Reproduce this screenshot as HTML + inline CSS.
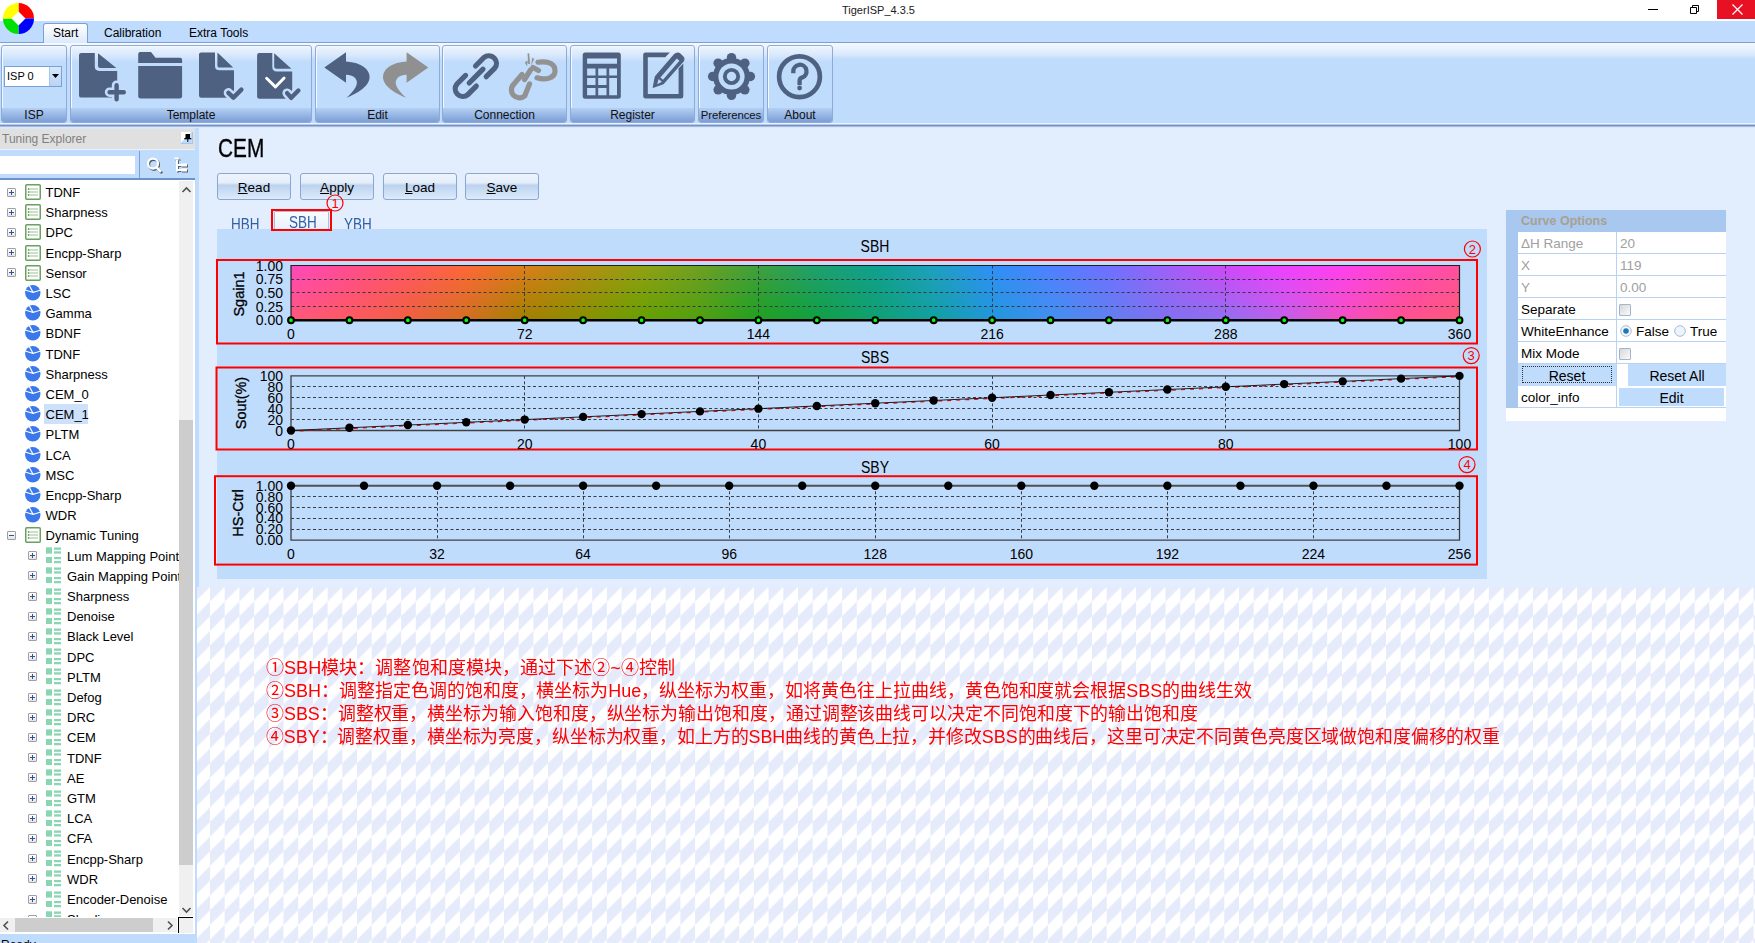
<!DOCTYPE html>
<html lang="zh-CN"><head><meta charset="utf-8">
<style>
*{box-sizing:border-box}
html,body{margin:0;padding:0}
body{width:1755px;height:943px;position:relative;overflow:hidden;font-family:"Liberation Sans",sans-serif;background:#fff;color:#000}
.a{position:absolute}
.t{position:absolute;white-space:nowrap;line-height:1}
/* ribbon */
.grp{position:absolute;top:45px;height:78px;border:1px solid #8eaad8;border-radius:3px;background:linear-gradient(#eef5fd 0px,#d6e7fb 10px,#c0dcfc 16px,#c0dcfc 100%);box-shadow:inset 1px 1px 0 #f4f8ff}
.grp .lb{position:absolute;left:0;right:0;bottom:0;height:14px;background:linear-gradient(#b4cff2,#7a9ed6);border-radius:0 0 2px 2px;font-size:12px;text-align:center;line-height:14px;color:#101010}
.ico{position:absolute}
.tree .r{position:absolute;height:20px;font-size:13.5px;line-height:20px;white-space:nowrap}
.btn{position:absolute;top:173px;height:27px;width:74px;border:1px solid #8aa6d6;border-radius:3px;background:linear-gradient(#eef4fc 0%,#e4eefa 35%,#bcd2ee 45%,#d0e2f6 80%,#dfeaf8 100%);font-size:13.5px;text-align:center;line-height:27px}
.ctit{font-size:14px}
.lbl{font-size:14px}
</style></head>
<body>
<!-- title bar -->
<div class="a" style="left:0;top:0;width:1755px;height:21px;background:#fff"></div>
<div class="t" style="left:842px;top:5px;font-size:11px;color:#202020">TigerISP_4.3.5</div>
<div class="a" style="left:1648px;top:9px;width:10px;height:1px;background:#000"></div>
<svg class="a" style="left:1690px;top:4px" width="11" height="11" viewBox="0 0 11 11"><path d="M0.5 3.5h6v6h-6z M2.5 3.5v-2h6v6h-2" fill="none" stroke="#000" stroke-width="1"/></svg>
<div class="a" style="left:1717px;top:0;width:38px;height:19px;background:#e81123"></div>
<svg class="a" style="left:1732px;top:4px" width="11" height="11" viewBox="0 0 11 11"><path d="M0.5 0.5L10.5 10.5M10.5 0.5L0.5 10.5" stroke="#fff" stroke-width="1.2"/></svg>

<!-- tab strip -->
<div class="a" style="left:0;top:21px;width:1755px;height:22px;background:#bfdbfd"></div>
<div class="a" style="left:0;top:42px;width:1755px;height:1px;background:#7d9fd4"></div>
<div class="a" style="left:43px;top:23px;width:45px;height:20px;border:1px solid #7d9fd4;border-bottom:none;border-radius:3px 3px 0 0;background:linear-gradient(#ffffff,#dce9fb)"></div>
<div class="t" style="left:53px;top:27px;font-size:12px">Start</div>
<div class="t" style="left:104px;top:27px;font-size:12px">Calibration</div>
<div class="t" style="left:189px;top:27px;font-size:12px">Extra Tools</div>

<!-- ribbon body -->
<div class="a" style="left:0;top:43px;width:1755px;height:84px;background:linear-gradient(#f6faff 0px,#d8e8fc 12px,#c0dcfc 16px,#c0dcfc 100%)"></div>



<!-- ribbon groups -->
<div class="grp" style="left:1px;width:66px"><div class="lb">ISP</div></div>
<div class="grp" style="left:70px;width:242px"><div class="lb">Template</div></div>
<div class="grp" style="left:315px;width:125px"><div class="lb">Edit</div></div>
<div class="grp" style="left:442px;width:125px"><div class="lb">Connection</div></div>
<div class="grp" style="left:570px;width:125px"><div class="lb">Register</div></div>
<div class="grp" style="left:698px;width:66px"><div class="lb" style="font-size:11.4px;letter-spacing:-0.1px">Preferences</div></div>
<div class="grp" style="left:767px;width:66px"><div class="lb">About</div></div>
<!-- ISP combo -->
<div class="a" style="left:4px;top:66px;width:58px;height:21px;border:1px solid #7d9fd4;background:#fff"></div>
<div class="a" style="left:49px;top:67px;width:12px;height:19px;background:linear-gradient(#d8e8fc,#b8d4f6);border-left:1px solid #a8c4ec"></div>
<svg class="a" style="left:52px;top:74px" width="7" height="5"><path d="M0 0H7L3.5 4Z" fill="#000"/></svg>
<div class="t" style="left:7px;top:71px;font-size:11px">ISP 0</div>
<!-- icons -->
<svg class="a" style="left:0;top:0" width="840" height="127">
 <g fill="#4f6181">
  <!-- new doc -->
  <path d="M79 55.2q0-2.2 2.2-2.2H94.8V66.5q0 4.4 4.4 4.4H117.2V95.4q0 2.2-2.2 2.2H81.2q-2.2 0-2.2-2.2Z"/><path d="M98 53.2L116.4 67.9H100.2q-2.2 0-2.2-2.2Z"/><path d="M109.6 92.2H123.8M116.6 85.2V99.2" fill="none" stroke="#c3dcfb" stroke-width="9.6" stroke-linecap="round" stroke-linejoin="round"/><path d="M109.6 92.2H123.8M116.6 85.2V99.2" fill="none" stroke="#4f6181" stroke-width="4.4" stroke-linecap="round" stroke-linejoin="round"/>
  <!-- folder -->
  <path d="M138.2 54q0-2 2-2H151L155.5 57.7H180q2.1 0 2.1 2.1V63H138.2Z"/>
  <path d="M138.2 66H182.1V96.3q0 2.1-2.1 2.1H140.3q-2.1 0-2.1-2.1Z"/>
  <!-- doc check -->
  <path d="M199 54.6q0-2.2 2.2-2.2H215V65.9q0 4.4 4.4 4.4H234V95.5q0 2.2-2.2 2.2H201.2q-2.2 0-2.2-2.2Z"/><path d="M217.4 52.6L233.2 67.6H219.6q-2.2 0-2.2-2.2Z"/><path d="M228.4 92.8L233.4 97.6L241.4 89.6" fill="none" stroke="#c3dcfb" stroke-width="9.4" stroke-linecap="round" stroke-linejoin="round"/><path d="M228.4 92.8L233.4 97.6L241.4 89.6" fill="none" stroke="#4f6181" stroke-width="4.4" stroke-linecap="round" stroke-linejoin="round"/>
  <!-- doc V check -->
  <path d="M257.1 55.2q0-2.2 2.2-2.2H272.3V67.1q0 4.4 4.4 4.4H292.2V96.6q0 2.2-2.2 2.2H259.3q-2.2 0-2.2-2.2Z"/><path d="M274.2 53.2L291.4 68.8H276.4q-2.2 0-2.2-2.2Z"/><path d="M266.6 78.3L275.4 86.9L284.1 78" fill="none" stroke="#fff" stroke-width="2.9" stroke-linecap="round" stroke-linejoin="round"/><path d="M287.1 93.1L291.2 97.8L298.4 90.5" fill="none" stroke="#c3dcfb" stroke-width="9.4" stroke-linecap="round" stroke-linejoin="round"/><path d="M287.1 93.1L291.2 97.8L298.4 90.5" fill="none" stroke="#4f6181" stroke-width="4.4" stroke-linecap="round" stroke-linejoin="round"/>
  <!-- undo -->
  <path d="M324.3 67.5L346 52.3V61.6C362 62.5 370 70 369.6 77.5C369 87 356 94 346.5 97.7C353 92 360 84 355.5 78.5C353.5 76 350 75 346 74.8V82.7Z"/>
  <!-- calculator -->
  <path fill-rule="evenodd" d="M585.2 52.4H618.3q2.5 0 2.5 2.5V96.2q0 2.5-2.5 2.5H585.2q-2.5 0-2.5-2.5V54.9q0-2.5 2.5-2.5Z M587.1 58.6H617V63.7H587.1Z M587.1 68.6H595.5V75.5H587.1Z M598.2 68.6H606.5V75.5H598.2Z M609.2 68.6H617V75.5H609.2Z M587.1 78H595.5V85H587.1Z M598.2 78H606.5V85H598.2Z M609.2 78H617V95.2H609.2Z M587.1 87.9H595.5V95.2H587.1Z M598.2 87.9H606.5V95.2H598.2Z"/>
  <!-- edit square -->
  <path d="M645.5 52.4H669.8L665.2 57.2H647.8V94H678.6V68.5L683.3 63.5V96.3q0 2.3-2.3 2.3H645.5q-2.3 0-2.3-2.3V54.7q0-2.3 2.3-2.3Z"/>
  <path stroke="#4f6181" stroke-width="1.2" stroke-linejoin="round" d="M653.3 87.3L655.4 76.6L674.6 54.4Q677.5 51.8 680.3 54.3L682.8 56.6Q685.2 59.4 682.3 62.2L663.3 83.6Z"/><path fill="#c0dcfc" d="M657.2 84.2L658.6 78.9L661.9 81.7Z M660.4 77.6L676.8 58.6L679.4 60.8L663 79.8Z"/>
  <!-- gear -->
  <g transform="translate(731.5 76.5)">
   <circle r="18.6"/><circle cx="0.00" cy="-18.90" r="4.7"/><circle cx="13.36" cy="-13.36" r="4.7"/><circle cx="18.90" cy="-0.00" r="4.7"/><circle cx="13.36" cy="13.36" r="4.7"/><circle cx="0.00" cy="18.90" r="4.7"/><circle cx="-13.36" cy="13.36" r="4.7"/><circle cx="-18.90" cy="0.00" r="4.7"/><circle cx="-13.36" cy="-13.36" r="4.7"/>
   <circle r="13.1" fill="#c0dcfc"/><circle r="8.6"/><circle r="4.7" fill="#c0dcfc"/>
  </g>
  <!-- help -->
  <circle cx="799.5" cy="76.7" r="20.4" fill="none" stroke="#4f6181" stroke-width="4.7"/>
  <path d="M793.3 73.2V71.5A6.6 6.6 0 1 1 802 77.6Q799.6 78.5 799.6 81V85" fill="none" stroke="#4f6181" stroke-width="4.3"/>
  <circle cx="799.6" cy="88" r="2.4"/>
 </g>
 <g fill="#909090">
  <path transform="translate(752.6 0) scale(-1 1)" d="M324.3 67.5L346 52.3V61.6C362 62.5 370 70 369.6 77.5C369 87 356 94 346.5 97.7C353 92 360 84 355.5 78.5C353.5 76 350 75 346 74.8V82.7Z"/>
 </g>
 <!-- link -->
 <g fill="none" stroke="#4f6181" stroke-width="5.2" stroke-linecap="round">
  <path d="M475.5 66L484 57.5A7.6 7.6 0 0 1 494.7 68.2L486.2 76.7"/>
  <path d="M465.6 75.4L457 84A7.6 7.6 0 0 0 467.7 94.7L476.3 86.1"/>
  <path d="M469.2 83L483 69.2"/>
 </g>
 <!-- broken link -->
 <g fill="none" stroke="#929292" stroke-width="5.2" stroke-linecap="round">
  <path d="M522 74.5L514 84A7.6 7.6 0 0 0 524.8 95.8L529.5 84"/>
  <path d="M538 62.2C549 60.5 555.5 64.5 555 71.5C554.5 78 546 80.5 537 77.8"/>
  <path d="M524.5 79.5L530.5 70"/>
  <path d="M533 67.5L538.5 70.5"/>
 </g>
 <g fill="#929292">
  <path d="M527.5 53.5L529.2 53.3L530 64L528.2 64Z"/>
  <path d="M524.8 62.2L527.8 60.5L527 66.5Z"/>
  <path d="M532.2 57.7L534.2 58.7L531.2 65.5Z"/>
 </g>
</svg>

<!-- main content light bg -->
<div class="a" style="left:195px;top:127px;width:1560px;height:816px;background:#e2eefd"></div>
<div class="a" style="left:195px;top:127px;width:4px;height:816px;background:#c0dcfc"></div>

<!-- MDI pattern -->
<svg class="a" style="left:197px;top:587px" width="1558" height="356">
 <defs>
  <pattern id="harl" patternUnits="userSpaceOnUse" width="29.4" height="29.4" x="13" y="-0.2">
    <rect width="29.4" height="29.4" fill="#e6ebfc"/>
    <path d="M0 14.7 L14.7 0 L14.7 14.7 L0 29.4 Z M14.7 14.7 L29.4 0 L29.4 14.7 L14.7 29.4 Z" fill="#ffffff"/>
  </pattern>
 </defs>
 <rect width="1558" height="356" fill="url(#harl)"/>
</svg>

<!-- MAIN CONTENT -->
<div class="t" style="left:217.5px;top:135px;font-size:26px;transform:scaleX(0.80);transform-origin:0 0;-webkit-text-stroke:0.35px #000">CEM</div>
<div class="btn" style="left:217px"><span style="text-decoration:underline">R</span>ead</div>
<div class="btn" style="left:300px"><span style="text-decoration:underline">A</span>pply</div>
<div class="btn" style="left:383px"><span style="text-decoration:underline">L</span>oad</div>
<div class="btn" style="left:465px"><span style="text-decoration:underline">S</span>ave</div>
<div class="a" style="left:274px;top:211px;width:55px;height:20px;background:linear-gradient(#f8fbff,#e8f0fb);border:1px solid #a8bedc;border-bottom:none;border-radius:2px 2px 0 0"></div>
<div class="t" style="left:231px;top:217.0px;font-size:13.5px;color:#2f5fa8;transform:scaleY(1.22);transform-origin:0 0">HBH</div>
<div class="t" style="left:289px;top:215.0px;font-size:13.5px;color:#2f5fa8;transform:scaleY(1.22);transform-origin:0 0">SBH</div>
<div class="t" style="left:344px;top:217.0px;font-size:13.5px;color:#2f5fa8;transform:scaleY(1.22);transform-origin:0 0">YBH</div>
<div class="a" style="left:217px;top:229px;width:1270px;height:350px;background:#c0dcfc"></div>
<div class="a" style="left:271px;top:209px;width:61px;height:22px;border:2px solid #f00"></div>
<svg class="a" style="left:0;top:0" width="1755" height="943" font-family="Liberation Sans, sans-serif">
<defs>
<linearGradient id="gt" x1="0" y1="0" x2="1" y2="0">
<stop offset="0" stop-color="#ff48c0"/><stop offset=".05" stop-color="#ff4c90"/><stop offset=".10" stop-color="#ff5860"/><stop offset=".15" stop-color="#ff6838"/><stop offset=".20" stop-color="#dc7e1a"/><stop offset=".25" stop-color="#b48e14"/><stop offset=".30" stop-color="#94a014"/><stop offset=".35" stop-color="#6ea024"/><stop offset=".40" stop-color="#40a040"/><stop offset=".45" stop-color="#20a070"/><stop offset=".50" stop-color="#10a090"/><stop offset=".55" stop-color="#20a0c0"/><stop offset=".60" stop-color="#3090f8"/><stop offset=".65" stop-color="#5080ff"/><stop offset=".70" stop-color="#7070ff"/><stop offset=".75" stop-color="#a060f8"/><stop offset=".80" stop-color="#d048f8"/><stop offset=".85" stop-color="#f040ff"/><stop offset=".90" stop-color="#ff40f0"/><stop offset=".95" stop-color="#ff48c0"/><stop offset="1" stop-color="#ff50a0"/>
</linearGradient>
<linearGradient id="gb" x1="0" y1="0" x2="1" y2="0">
<stop offset="0" stop-color="#ff5878"/><stop offset=".05" stop-color="#ff5a60"/><stop offset=".10" stop-color="#f06040"/><stop offset=".15" stop-color="#d07020"/><stop offset=".20" stop-color="#a08000"/><stop offset=".25" stop-color="#889000"/><stop offset=".30" stop-color="#66a000"/><stop offset=".35" stop-color="#50a010"/><stop offset=".40" stop-color="#20a020"/><stop offset=".45" stop-color="#10a040"/><stop offset=".50" stop-color="#10a070"/><stop offset=".55" stop-color="#10a0a0"/><stop offset=".60" stop-color="#2098d8"/><stop offset=".65" stop-color="#4090f0"/><stop offset=".70" stop-color="#6080f0"/><stop offset=".75" stop-color="#8070f0"/><stop offset=".80" stop-color="#9070f0"/><stop offset=".85" stop-color="#c060e8"/><stop offset=".90" stop-color="#f050c0"/><stop offset=".95" stop-color="#ff5090"/><stop offset="1" stop-color="#ff5878"/>
</linearGradient>
<linearGradient id="gm" x1="0" y1="0" x2="0" y2="1"><stop offset="0" stop-color="#fff" stop-opacity="0"/><stop offset="1" stop-color="#fff" stop-opacity="1"/></linearGradient>
<mask id="mk" maskContentUnits="objectBoundingBox"><rect width="1" height="1" fill="url(#gm)"/></mask>
</defs>
<text transform="translate(875 252.2) scale(1 1.13)" font-size="14" text-anchor="middle">SBH</text>
<rect x="217" y="260" width="1260" height="83.5" fill="none" stroke="#f00" stroke-width="2"/>
<circle cx="1472.4" cy="249" r="8" fill="none" stroke="#f00" stroke-width="1.2"/><text x="1472.4" y="253.6" font-size="13" fill="#f00" text-anchor="middle">2</text>
<rect x="291.0" y="265.5" width="1168.5" height="54.69999999999999" fill="url(#gt)"/>
<rect x="291.0" y="265.5" width="1168.5" height="54.69999999999999" fill="url(#gb)" mask="url(#mk)"/>
<path d="M524.5 265.5V320.2" stroke="#363c44" stroke-width="1" stroke-dasharray="3 2.5"/>
<path d="M758.5 265.5V320.2" stroke="#363c44" stroke-width="1" stroke-dasharray="3 2.5"/>
<path d="M992.5 265.5V320.2" stroke="#363c44" stroke-width="1" stroke-dasharray="3 2.5"/>
<path d="M1225.5 265.5V320.2" stroke="#363c44" stroke-width="1" stroke-dasharray="3 2.5"/>
<path d="M291 306.5H1459.5" stroke="#363c44" stroke-width="1" stroke-dasharray="3 2.5"/>
<path d="M291 292.5H1459.5" stroke="#363c44" stroke-width="1" stroke-dasharray="3 2.5"/>
<path d="M291 279.5H1459.5" stroke="#363c44" stroke-width="1" stroke-dasharray="3 2.5"/>
<path d="M291.0 320.2V265.5H1459.5V320.2" fill="none" stroke="#202020" stroke-width="1.2"/>
<path d="M291.0 320.2H1459.5" stroke="#000" stroke-width="2.6"/>
<circle cx="291" cy="320.2" r="2.9" fill="#00ff00" stroke="#000" stroke-width="2.1"/>
<circle cx="349.43" cy="320.2" r="2.9" fill="#00ff00" stroke="#000" stroke-width="2.1"/>
<circle cx="407.85" cy="320.2" r="2.9" fill="#00ff00" stroke="#000" stroke-width="2.1"/>
<circle cx="466.27" cy="320.2" r="2.9" fill="#00ff00" stroke="#000" stroke-width="2.1"/>
<circle cx="524.7" cy="320.2" r="2.9" fill="#00ff00" stroke="#000" stroke-width="2.1"/>
<circle cx="583.12" cy="320.2" r="2.9" fill="#00ff00" stroke="#000" stroke-width="2.1"/>
<circle cx="641.55" cy="320.2" r="2.9" fill="#00ff00" stroke="#000" stroke-width="2.1"/>
<circle cx="699.98" cy="320.2" r="2.9" fill="#00ff00" stroke="#000" stroke-width="2.1"/>
<circle cx="758.4" cy="320.2" r="2.9" fill="#00ff00" stroke="#000" stroke-width="2.1"/>
<circle cx="816.83" cy="320.2" r="2.9" fill="#00ff00" stroke="#000" stroke-width="2.1"/>
<circle cx="875.25" cy="320.2" r="2.9" fill="#00ff00" stroke="#000" stroke-width="2.1"/>
<circle cx="933.67" cy="320.2" r="2.9" fill="#00ff00" stroke="#000" stroke-width="2.1"/>
<circle cx="992.1" cy="320.2" r="2.9" fill="#00ff00" stroke="#000" stroke-width="2.1"/>
<circle cx="1050.53" cy="320.2" r="2.9" fill="#00ff00" stroke="#000" stroke-width="2.1"/>
<circle cx="1108.95" cy="320.2" r="2.9" fill="#00ff00" stroke="#000" stroke-width="2.1"/>
<circle cx="1167.38" cy="320.2" r="2.9" fill="#00ff00" stroke="#000" stroke-width="2.1"/>
<circle cx="1225.8" cy="320.2" r="2.9" fill="#00ff00" stroke="#000" stroke-width="2.1"/>
<circle cx="1284.22" cy="320.2" r="2.9" fill="#00ff00" stroke="#000" stroke-width="2.1"/>
<circle cx="1342.65" cy="320.2" r="2.9" fill="#00ff00" stroke="#000" stroke-width="2.1"/>
<circle cx="1401.08" cy="320.2" r="2.9" fill="#00ff00" stroke="#000" stroke-width="2.1"/>
<circle cx="1459.5" cy="320.2" r="2.9" fill="#00ff00" stroke="#000" stroke-width="2.1"/>
<text x="283" y="270.5" font-size="14" text-anchor="end">1.00</text>
<text x="283" y="284.18" font-size="14" text-anchor="end">0.75</text>
<text x="283" y="297.85" font-size="14" text-anchor="end">0.50</text>
<text x="283" y="311.52" font-size="14" text-anchor="end">0.25</text>
<text x="283" y="325.2" font-size="14" text-anchor="end">0.00</text>
<text x="291" y="338.5" font-size="14" text-anchor="middle">0</text>
<text x="524.7" y="338.5" font-size="14" text-anchor="middle">72</text>
<text x="758.4" y="338.5" font-size="14" text-anchor="middle">144</text>
<text x="992.1" y="338.5" font-size="14" text-anchor="middle">216</text>
<text x="1225.8" y="338.5" font-size="14" text-anchor="middle">288</text>
<text x="1459.5" y="338.5" font-size="14" text-anchor="middle">360</text>
<text transform="translate(243.5 294) rotate(-90)" font-size="14.5" stroke="#000" stroke-width="0.3" text-anchor="middle">Sgain1</text>
<text transform="translate(875 363.2) scale(1 1.13)" font-size="14" text-anchor="middle">SBS</text>
<rect x="216.5" y="367.5" width="1260.5" height="82" fill="none" stroke="#f00" stroke-width="2"/>
<circle cx="1471.2" cy="355.6" r="8" fill="none" stroke="#f00" stroke-width="1.2"/><text x="1471.2" y="360.20000000000005" font-size="13" fill="#f00" text-anchor="middle">3</text>
<path d="M524.5 375.9V430.5" stroke="#363c44" stroke-width="1" stroke-dasharray="3 2.5"/>
<path d="M758.5 375.9V430.5" stroke="#363c44" stroke-width="1" stroke-dasharray="3 2.5"/>
<path d="M992.5 375.9V430.5" stroke="#363c44" stroke-width="1" stroke-dasharray="3 2.5"/>
<path d="M1225.5 375.9V430.5" stroke="#363c44" stroke-width="1" stroke-dasharray="3 2.5"/>
<path d="M291 419.5H1459.5" stroke="#363c44" stroke-width="1" stroke-dasharray="3 2.5"/>
<path d="M291 408.5H1459.5" stroke="#363c44" stroke-width="1" stroke-dasharray="3 2.5"/>
<path d="M291 397.5H1459.5" stroke="#363c44" stroke-width="1" stroke-dasharray="3 2.5"/>
<path d="M291 386.5H1459.5" stroke="#363c44" stroke-width="1" stroke-dasharray="3 2.5"/>
<path d="M291.0 430.5V375.9H1459.5V430.5H291.0" fill="none" stroke="#404040" stroke-width="1.3"/>
<path d="M291.0 431.3L1459.5 376.7" stroke="#f00000" stroke-width="1.1" stroke-dasharray="4 5"/>
<path d="M291.0 430.5L1459.5 375.9" stroke="#000" stroke-width="1" opacity="0.85"/>
<circle cx="291" cy="430.5" r="4.2" fill="#000"/>
<circle cx="349.43" cy="427.77" r="4.2" fill="#000"/>
<circle cx="407.85" cy="425.04" r="4.2" fill="#000"/>
<circle cx="466.27" cy="422.31" r="4.2" fill="#000"/>
<circle cx="524.7" cy="419.58" r="4.2" fill="#000"/>
<circle cx="583.12" cy="416.85" r="4.2" fill="#000"/>
<circle cx="641.55" cy="414.12" r="4.2" fill="#000"/>
<circle cx="699.98" cy="411.39" r="4.2" fill="#000"/>
<circle cx="758.4" cy="408.66" r="4.2" fill="#000"/>
<circle cx="816.83" cy="405.93" r="4.2" fill="#000"/>
<circle cx="875.25" cy="403.2" r="4.2" fill="#000"/>
<circle cx="933.67" cy="400.47" r="4.2" fill="#000"/>
<circle cx="992.1" cy="397.74" r="4.2" fill="#000"/>
<circle cx="1050.53" cy="395.01" r="4.2" fill="#000"/>
<circle cx="1108.95" cy="392.28" r="4.2" fill="#000"/>
<circle cx="1167.38" cy="389.55" r="4.2" fill="#000"/>
<circle cx="1225.8" cy="386.82" r="4.2" fill="#000"/>
<circle cx="1284.22" cy="384.09" r="4.2" fill="#000"/>
<circle cx="1342.65" cy="381.36" r="4.2" fill="#000"/>
<circle cx="1401.08" cy="378.63" r="4.2" fill="#000"/>
<circle cx="1459.5" cy="375.9" r="4.2" fill="#000"/>
<text x="283" y="380.9" font-size="14" text-anchor="end">100</text>
<text x="283" y="391.82" font-size="14" text-anchor="end">80</text>
<text x="283" y="402.74" font-size="14" text-anchor="end">60</text>
<text x="283" y="413.66" font-size="14" text-anchor="end">40</text>
<text x="283" y="424.58" font-size="14" text-anchor="end">20</text>
<text x="283" y="435.5" font-size="14" text-anchor="end">0</text>
<text x="291" y="448.5" font-size="14" text-anchor="middle">0</text>
<text x="524.7" y="448.5" font-size="14" text-anchor="middle">20</text>
<text x="758.4" y="448.5" font-size="14" text-anchor="middle">40</text>
<text x="992.1" y="448.5" font-size="14" text-anchor="middle">60</text>
<text x="1225.8" y="448.5" font-size="14" text-anchor="middle">80</text>
<text x="1459.5" y="448.5" font-size="14" text-anchor="middle">100</text>
<text transform="translate(246 403) rotate(-90)" font-size="14.5" stroke="#000" stroke-width="0.3" text-anchor="middle">Sout(%)</text>
<text transform="translate(875 473.2) scale(1 1.13)" font-size="14" text-anchor="middle">SBY</text>
<rect x="215" y="476.2" width="1262" height="88.4" fill="none" stroke="#f00" stroke-width="2"/>
<circle cx="1467" cy="464.6" r="8" fill="none" stroke="#f00" stroke-width="1.2"/><text x="1467" y="469.20000000000005" font-size="13" fill="#f00" text-anchor="middle">4</text>
<path d="M437.5 485.8V540.2" stroke="#363c44" stroke-width="1" stroke-dasharray="3 2.5"/>
<path d="M583.5 485.8V540.2" stroke="#363c44" stroke-width="1" stroke-dasharray="3 2.5"/>
<path d="M729.5 485.8V540.2" stroke="#363c44" stroke-width="1" stroke-dasharray="3 2.5"/>
<path d="M875.5 485.8V540.2" stroke="#363c44" stroke-width="1" stroke-dasharray="3 2.5"/>
<path d="M1021.5 485.8V540.2" stroke="#363c44" stroke-width="1" stroke-dasharray="3 2.5"/>
<path d="M1167.5 485.8V540.2" stroke="#363c44" stroke-width="1" stroke-dasharray="3 2.5"/>
<path d="M1313.5 485.8V540.2" stroke="#363c44" stroke-width="1" stroke-dasharray="3 2.5"/>
<path d="M291 529.5H1459.5" stroke="#363c44" stroke-width="1" stroke-dasharray="3 2.5"/>
<path d="M291 518.5H1459.5" stroke="#363c44" stroke-width="1" stroke-dasharray="3 2.5"/>
<path d="M291 507.5H1459.5" stroke="#363c44" stroke-width="1" stroke-dasharray="3 2.5"/>
<path d="M291 496.5H1459.5" stroke="#363c44" stroke-width="1" stroke-dasharray="3 2.5"/>
<path d="M291.0 485.8V540.2H1459.5V485.8" fill="none" stroke="#404040" stroke-width="1.3"/>
<path d="M291.0 485.8H1459.5" stroke="#505050" stroke-width="2"/>
<circle cx="291" cy="485.8" r="4.2" fill="#000"/>
<circle cx="364.03" cy="485.8" r="4.2" fill="#000"/>
<circle cx="437.06" cy="485.8" r="4.2" fill="#000"/>
<circle cx="510.09" cy="485.8" r="4.2" fill="#000"/>
<circle cx="583.12" cy="485.8" r="4.2" fill="#000"/>
<circle cx="656.16" cy="485.8" r="4.2" fill="#000"/>
<circle cx="729.19" cy="485.8" r="4.2" fill="#000"/>
<circle cx="802.22" cy="485.8" r="4.2" fill="#000"/>
<circle cx="875.25" cy="485.8" r="4.2" fill="#000"/>
<circle cx="948.28" cy="485.8" r="4.2" fill="#000"/>
<circle cx="1021.31" cy="485.8" r="4.2" fill="#000"/>
<circle cx="1094.34" cy="485.8" r="4.2" fill="#000"/>
<circle cx="1167.38" cy="485.8" r="4.2" fill="#000"/>
<circle cx="1240.41" cy="485.8" r="4.2" fill="#000"/>
<circle cx="1313.44" cy="485.8" r="4.2" fill="#000"/>
<circle cx="1386.47" cy="485.8" r="4.2" fill="#000"/>
<circle cx="1459.5" cy="485.8" r="4.2" fill="#000"/>
<text x="283" y="490.8" font-size="14" text-anchor="end">1.00</text>
<text x="283" y="501.68" font-size="14" text-anchor="end">0.80</text>
<text x="283" y="512.56" font-size="14" text-anchor="end">0.60</text>
<text x="283" y="523.44" font-size="14" text-anchor="end">0.40</text>
<text x="283" y="534.32" font-size="14" text-anchor="end">0.20</text>
<text x="283" y="545.2" font-size="14" text-anchor="end">0.00</text>
<text x="291" y="558.5" font-size="14" text-anchor="middle">0</text>
<text x="437.06" y="558.5" font-size="14" text-anchor="middle">32</text>
<text x="583.12" y="558.5" font-size="14" text-anchor="middle">64</text>
<text x="729.19" y="558.5" font-size="14" text-anchor="middle">96</text>
<text x="875.25" y="558.5" font-size="14" text-anchor="middle">128</text>
<text x="1021.31" y="558.5" font-size="14" text-anchor="middle">160</text>
<text x="1167.38" y="558.5" font-size="14" text-anchor="middle">192</text>
<text x="1313.44" y="558.5" font-size="14" text-anchor="middle">224</text>
<text x="1459.5" y="558.5" font-size="14" text-anchor="middle">256</text>
<text transform="translate(243 513) rotate(-90)" font-size="14.5" stroke="#000" stroke-width="0.3" text-anchor="middle">HS-Ctrl</text>
<circle cx="335" cy="203" r="8" fill="none" stroke="#f00" stroke-width="1.2"/><text x="335" y="207.6" font-size="13" fill="#f00" text-anchor="middle">1</text>
</svg>

<div class="a" style="left:1506px;top:210px;width:220px;height:211px;background:#fff"></div>
<div class="a" style="left:1506px;top:210px;width:220px;height:22px;background:#a8c8f0"></div>
<div class="t" style="left:1521px;top:215px;font-size:12.5px;font-weight:bold;color:#a8a090">Curve Options</div>
<div class="a" style="left:1506px;top:232px;width:12px;height:176px;background:#a8c8f0"></div>
<div class="a" style="left:1518px;top:253px;width:208px;height:1px;background:#b8d2f4"></div><div class="t" style="left:1521px;top:237px;font-size:13.5px;color:#a0a0a0">ΔH Range</div><div class="t" style="left:1620px;top:237px;font-size:13.5px;color:#a0a0a0">20</div><div class="a" style="left:1518px;top:275px;width:208px;height:1px;background:#b8d2f4"></div><div class="t" style="left:1521px;top:259px;font-size:13.5px;color:#a0a0a0">X</div><div class="t" style="left:1620px;top:259px;font-size:13.5px;color:#a0a0a0">119</div><div class="a" style="left:1518px;top:297px;width:208px;height:1px;background:#b8d2f4"></div><div class="t" style="left:1521px;top:281px;font-size:13.5px;color:#a0a0a0">Y</div><div class="t" style="left:1620px;top:281px;font-size:13.5px;color:#a0a0a0">0.00</div><div class="a" style="left:1518px;top:319px;width:208px;height:1px;background:#b8d2f4"></div><div class="t" style="left:1521px;top:303px;font-size:13.5px;color:#000">Separate</div><div class="a" style="left:1619px;top:304px;width:12px;height:12px;border:1px solid #a4b4cc;border-radius:1px;background:linear-gradient(135deg,#d8d8d8,#fafafa)"></div><div class="a" style="left:1518px;top:341px;width:208px;height:1px;background:#b8d2f4"></div><div class="t" style="left:1521px;top:325px;font-size:13.5px;color:#000">WhiteEnhance</div><svg class="a" style="left:1619px;top:324px" width="14" height="14"><circle cx="7" cy="7" r="5.3" fill="#f4f8fc" stroke="#a8bcd8"/><circle cx="7" cy="7" r="2.8" fill="#1e78b4"/></svg><div class="t" style="left:1636px;top:325px;font-size:13.5px">False</div><svg class="a" style="left:1673px;top:324px" width="14" height="14"><circle cx="7" cy="7" r="5.3" fill="#eef4fc" stroke="#a8bcd8"/></svg><div class="t" style="left:1690px;top:325px;font-size:13.5px">True</div><div class="a" style="left:1518px;top:363px;width:208px;height:1px;background:#b8d2f4"></div><div class="t" style="left:1521px;top:347px;font-size:13.5px;color:#000">Mix Mode</div><div class="a" style="left:1619px;top:348px;width:12px;height:12px;border:1px solid #a4b4cc;border-radius:1px;background:linear-gradient(135deg,#d8d8d8,#fafafa)"></div><div class="a" style="left:1518px;top:385px;width:208px;height:1px;background:#b8d2f4"></div><div class="a" style="left:1518px;top:364px;width:208px;height:22px;background:#c0dcfc"></div><div class="a" style="left:1616px;top:364px;width:12px;height:22px;background:#fff"></div><div class="a" style="left:1522px;top:366px;width:90px;height:17px;border:1px dotted #303030"></div><div class="t" style="left:1522px;top:368.5px;width:90px;text-align:center;font-size:14px">Reset</div><div class="t" style="left:1628px;top:368.5px;width:98px;text-align:center;font-size:14px">Reset All</div><div class="a" style="left:1518px;top:407px;width:208px;height:1px;background:#b8d2f4"></div><div class="t" style="left:1521px;top:391px;font-size:13.5px;color:#000">color_info</div><div class="a" style="left:1619px;top:388px;width:105px;height:18px;background:#c0dcfc"></div><div class="t" style="left:1619px;top:391px;width:105px;text-align:center;font-size:14px">Edit</div><div class="a" style="left:1616px;top:232px;width:1px;height:176px;background:#b8d2f4"></div>
<div class="t" style="left:266px;top:656.7px;font-size:18px;line-height:22px;color:#f00;transform:scaleX(1.0037);transform-origin:0 0">①SBH模块：调整饱和度模块，通过下述②~④控制</div>
<div class="t" style="left:266px;top:679.7px;font-size:18px;line-height:22px;color:#f00;transform:scaleX(0.9980);transform-origin:0 0">②SBH：调整指定色调的饱和度，横坐标为Hue，纵坐标为权重，如将黄色往上拉曲线，黄色饱和度就会根据SBS的曲线生效</div>
<div class="t" style="left:266px;top:702.7px;font-size:18px;line-height:22px;color:#f00;transform:scaleX(0.9957);transform-origin:0 0">③SBS：调整权重，横坐标为输入饱和度，纵坐标为输出饱和度，通过调整该曲线可以决定不同饱和度下的输出饱和度</div>
<div class="t" style="left:266px;top:725.7px;font-size:18px;line-height:22px;color:#f00;transform:scaleX(0.9928);transform-origin:0 0">④SBY：调整权重，横坐标为亮度，纵坐标为权重，如上方的SBH曲线的黄色上拉，并修改SBS的曲线后，这里可决定不同黄色亮度区域做饱和度偏移的权重</div>
<!-- END MAIN -->
<!-- left panel -->
<div class="a" style="left:0;top:127px;width:195px;height:816px;background:#fff"></div><div class="a" style="left:0;top:127px;width:195px;height:2px;background:#d8e6f8"></div>
<div class="a" style="left:0;top:129px;width:195px;height:20px;background:#e0e0e0"></div>
<div class="t" style="left:2px;top:133px;font-size:12px;color:#808080">Tuning Explorer</div>
<div class="a" style="left:181px;top:132px;width:12px;height:12px;background:linear-gradient(135deg,#fff 50%,#c0dcfc 50%);border-right:1px solid #a8c4ec;border-bottom:1px solid #a8c4ec"></div>
<svg class="a" style="left:184px;top:133px" width="8" height="10"><rect x="1.5" y="1" width="4.5" height="4.5" fill="#000"/><rect x="0.3" y="5" width="7" height="1.3" fill="#000"/><rect x="3.3" y="6" width="1" height="3" fill="#000"/></svg>
<div class="a" style="left:0;top:149px;width:195px;height:31px;background:#c0dcfc;border-bottom:2px solid #6f92cc;border-top:1px solid #e8f0fc"></div>
<div class="a" style="left:0;top:156px;width:135px;height:18px;background:#fff"></div>
<div class="a" style="left:139px;top:151px;width:1px;height:27px;background:#7d9fd4"></div>
<svg class="a" style="left:146px;top:156px" width="18" height="20" viewBox="0 0 18 20"><circle cx="7.9" cy="8.7" r="5" fill="none" stroke="#38444f" stroke-width="2.4" opacity="0.85"/><path d="M11.9 12.9L16.1 17.1" stroke="#38444f" stroke-width="2.6" opacity="0.85"/><circle cx="7" cy="7.6" r="5" fill="none" stroke="#fff" stroke-width="2.3"/><path d="M10.8 11.6L15 15.8" stroke="#fff" stroke-width="2.5"/></svg>
<svg class="a" style="left:173px;top:157px" width="18" height="18" viewBox="0 0 18 18"><g fill="#38444f" opacity="0.8" transform="translate(1 1)"><path d="M1.5 0.5h4l1.5 2h-5.5z"/><rect x="3" y="2.5" width="2" height="12"/><rect x="4" y="7" width="4" height="2"/><rect x="4" y="12" width="4" height="2"/><rect x="8" y="6.5" width="6" height="3"/><rect x="8" y="11.5" width="6" height="3"/></g><g fill="#fff"><path d="M1.5 0.5h4l1.5 2h-5.5z"/><rect x="3" y="2.5" width="2" height="12"/><rect x="4" y="7" width="4" height="2"/><rect x="4" y="12" width="4" height="2"/><rect x="8" y="6.5" width="6" height="3"/><rect x="8" y="11.5" width="6" height="3"/></g></svg>
<!-- vertical scrollbar -->
<div class="a" style="left:179px;top:181px;width:14px;height:735px;background:#f0f0f0"></div>
<div class="a" style="left:193px;top:181px;width:2px;height:753px;background:#fff"></div>
<div class="a" style="left:179px;top:420px;width:14px;height:445px;background:#cdcdcd"></div>
<svg class="a" style="left:181px;top:186px" width="11" height="8"><path d="M1.5 6L5.5 2L9.5 6" fill="none" stroke="#505050" stroke-width="1.6"/></svg>
<svg class="a" style="left:181px;top:906px" width="11" height="8"><path d="M1.5 2L5.5 6L9.5 2" fill="none" stroke="#505050" stroke-width="1.6"/></svg>
<!-- horizontal scrollbar -->
<div class="a" style="left:0;top:918px;width:177px;height:14px;background:#f0f0f0"></div>
<div class="a" style="left:0;top:932px;width:195px;height:2px;background:#fff"></div>
<div class="a" style="left:14.5px;top:918px;width:138.5px;height:14px;background:#cdcdcd"></div>
<svg class="a" style="left:2px;top:920px" width="8" height="11"><path d="M6 1.5L2 5.5L6 9.5" fill="none" stroke="#505050" stroke-width="1.6"/></svg>
<svg class="a" style="left:166px;top:920px" width="8" height="11"><path d="M2 1.5L6 5.5L2 9.5" fill="none" stroke="#505050" stroke-width="1.6"/></svg>
<div class="a" style="left:178px;top:917px;width:15px;height:16px;background:#f0f0f0;border-left:1px solid #000;border-top:1px solid #000"></div>
<!-- status bar -->
<div class="a" style="left:0;top:934px;width:195px;height:9px;background:#c0dcfc;overflow:hidden"><div class="t" style="left:1px;top:5px;font-size:12px">Ready</div></div>
<div class="a" style="left:0;top:181px;width:179px;height:736px;overflow:hidden">
<div class="a" style="left:7px;top:6.5px;width:9px;height:9px;border:1px solid #a0a0a0;border-radius:1px;background:linear-gradient(#fff,#e4e4e4)"></div><div class="a" style="left:9px;top:10.5px;width:5px;height:1px;background:#3050a0"></div><div class="a" style="left:11px;top:8.5px;width:1px;height:5px;background:#3050a0"></div>
<svg class="a" style="left:24.5px;top:3.0px" width="16" height="16" viewBox="0 0 16 16"><rect x="0.75" y="0.75" width="14.5" height="14.5" rx="1" fill="#fff" stroke="#6aa060" stroke-width="1.5"/><g fill="#6aa060"><circle cx="3.6" cy="5" r="0.9"/><circle cx="3.6" cy="8" r="0.9"/><circle cx="3.6" cy="11" r="0.9"/></g><g stroke="#8cb888" stroke-width="0.9"><path d="M4.5 5H13M4.5 8H13M4.5 11H13"/></g></svg>
<div class="t" style="left:45.5px;top:4.0px;font-size:13px;line-height:16px">TDNF</div>
<div class="a" style="left:7px;top:26.7px;width:9px;height:9px;border:1px solid #a0a0a0;border-radius:1px;background:linear-gradient(#fff,#e4e4e4)"></div><div class="a" style="left:9px;top:30.7px;width:5px;height:1px;background:#3050a0"></div><div class="a" style="left:11px;top:28.7px;width:1px;height:5px;background:#3050a0"></div>
<svg class="a" style="left:24.5px;top:23.2px" width="16" height="16" viewBox="0 0 16 16"><rect x="0.75" y="0.75" width="14.5" height="14.5" rx="1" fill="#fff" stroke="#6aa060" stroke-width="1.5"/><g fill="#6aa060"><circle cx="3.6" cy="5" r="0.9"/><circle cx="3.6" cy="8" r="0.9"/><circle cx="3.6" cy="11" r="0.9"/></g><g stroke="#8cb888" stroke-width="0.9"><path d="M4.5 5H13M4.5 8H13M4.5 11H13"/></g></svg>
<div class="t" style="left:45.5px;top:24.2px;font-size:13px;line-height:16px">Sharpness</div>
<div class="a" style="left:7px;top:46.9px;width:9px;height:9px;border:1px solid #a0a0a0;border-radius:1px;background:linear-gradient(#fff,#e4e4e4)"></div><div class="a" style="left:9px;top:50.9px;width:5px;height:1px;background:#3050a0"></div><div class="a" style="left:11px;top:48.9px;width:1px;height:5px;background:#3050a0"></div>
<svg class="a" style="left:24.5px;top:43.4px" width="16" height="16" viewBox="0 0 16 16"><rect x="0.75" y="0.75" width="14.5" height="14.5" rx="1" fill="#fff" stroke="#6aa060" stroke-width="1.5"/><g fill="#6aa060"><circle cx="3.6" cy="5" r="0.9"/><circle cx="3.6" cy="8" r="0.9"/><circle cx="3.6" cy="11" r="0.9"/></g><g stroke="#8cb888" stroke-width="0.9"><path d="M4.5 5H13M4.5 8H13M4.5 11H13"/></g></svg>
<div class="t" style="left:45.5px;top:44.4px;font-size:13px;line-height:16px">DPC</div>
<div class="a" style="left:7px;top:67.1px;width:9px;height:9px;border:1px solid #a0a0a0;border-radius:1px;background:linear-gradient(#fff,#e4e4e4)"></div><div class="a" style="left:9px;top:71.1px;width:5px;height:1px;background:#3050a0"></div><div class="a" style="left:11px;top:69.1px;width:1px;height:5px;background:#3050a0"></div>
<svg class="a" style="left:24.5px;top:63.6px" width="16" height="16" viewBox="0 0 16 16"><rect x="0.75" y="0.75" width="14.5" height="14.5" rx="1" fill="#fff" stroke="#6aa060" stroke-width="1.5"/><g fill="#6aa060"><circle cx="3.6" cy="5" r="0.9"/><circle cx="3.6" cy="8" r="0.9"/><circle cx="3.6" cy="11" r="0.9"/></g><g stroke="#8cb888" stroke-width="0.9"><path d="M4.5 5H13M4.5 8H13M4.5 11H13"/></g></svg>
<div class="t" style="left:45.5px;top:64.6px;font-size:13px;line-height:16px">Encpp-Sharp</div>
<div class="a" style="left:7px;top:87.3px;width:9px;height:9px;border:1px solid #a0a0a0;border-radius:1px;background:linear-gradient(#fff,#e4e4e4)"></div><div class="a" style="left:9px;top:91.3px;width:5px;height:1px;background:#3050a0"></div><div class="a" style="left:11px;top:89.3px;width:1px;height:5px;background:#3050a0"></div>
<svg class="a" style="left:24.5px;top:83.8px" width="16" height="16" viewBox="0 0 16 16"><rect x="0.75" y="0.75" width="14.5" height="14.5" rx="1" fill="#fff" stroke="#6aa060" stroke-width="1.5"/><g fill="#6aa060"><circle cx="3.6" cy="5" r="0.9"/><circle cx="3.6" cy="8" r="0.9"/><circle cx="3.6" cy="11" r="0.9"/></g><g stroke="#8cb888" stroke-width="0.9"><path d="M4.5 5H13M4.5 8H13M4.5 11H13"/></g></svg>
<div class="t" style="left:45.5px;top:84.8px;font-size:13px;line-height:16px">Sensor</div>
<svg class="a" style="left:24.5px;top:104.0px" width="16" height="16" viewBox="0 0 16 16"><circle cx="7.8" cy="7.8" r="7.7" fill="#3a78ec"/><path d="M-0.5 4.6Q4 6.2 8 7.3Q12 6.2 16.5 4.6M8 7.3L4 0" stroke="#fff" stroke-width="1.2" fill="none"/></svg>
<div class="t" style="left:45.5px;top:105.0px;font-size:13px;line-height:16px">LSC</div>
<svg class="a" style="left:24.5px;top:124.2px" width="16" height="16" viewBox="0 0 16 16"><circle cx="7.8" cy="7.8" r="7.7" fill="#3a78ec"/><path d="M-0.5 4.6Q4 6.2 8 7.3Q12 6.2 16.5 4.6M8 7.3L4 0" stroke="#fff" stroke-width="1.2" fill="none"/></svg>
<div class="t" style="left:45.5px;top:125.2px;font-size:13px;line-height:16px">Gamma</div>
<svg class="a" style="left:24.5px;top:144.4px" width="16" height="16" viewBox="0 0 16 16"><circle cx="7.8" cy="7.8" r="7.7" fill="#3a78ec"/><path d="M-0.5 4.6Q4 6.2 8 7.3Q12 6.2 16.5 4.6M8 7.3L4 0" stroke="#fff" stroke-width="1.2" fill="none"/></svg>
<div class="t" style="left:45.5px;top:145.4px;font-size:13px;line-height:16px">BDNF</div>
<svg class="a" style="left:24.5px;top:164.6px" width="16" height="16" viewBox="0 0 16 16"><circle cx="7.8" cy="7.8" r="7.7" fill="#3a78ec"/><path d="M-0.5 4.6Q4 6.2 8 7.3Q12 6.2 16.5 4.6M8 7.3L4 0" stroke="#fff" stroke-width="1.2" fill="none"/></svg>
<div class="t" style="left:45.5px;top:165.6px;font-size:13px;line-height:16px">TDNF</div>
<svg class="a" style="left:24.5px;top:184.8px" width="16" height="16" viewBox="0 0 16 16"><circle cx="7.8" cy="7.8" r="7.7" fill="#3a78ec"/><path d="M-0.5 4.6Q4 6.2 8 7.3Q12 6.2 16.5 4.6M8 7.3L4 0" stroke="#fff" stroke-width="1.2" fill="none"/></svg>
<div class="t" style="left:45.5px;top:185.8px;font-size:13px;line-height:16px">Sharpness</div>
<svg class="a" style="left:24.5px;top:205.0px" width="16" height="16" viewBox="0 0 16 16"><circle cx="7.8" cy="7.8" r="7.7" fill="#3a78ec"/><path d="M-0.5 4.6Q4 6.2 8 7.3Q12 6.2 16.5 4.6M8 7.3L4 0" stroke="#fff" stroke-width="1.2" fill="none"/></svg>
<div class="t" style="left:45.5px;top:206.0px;font-size:13px;line-height:16px">CEM_0</div>
<div class="a" style="left:44px;top:223.2px;width:44px;height:20px;background:#cde1fa"></div>
<svg class="a" style="left:24.5px;top:225.2px" width="16" height="16" viewBox="0 0 16 16"><circle cx="7.8" cy="7.8" r="7.7" fill="#3a78ec"/><path d="M-0.5 4.6Q4 6.2 8 7.3Q12 6.2 16.5 4.6M8 7.3L4 0" stroke="#fff" stroke-width="1.2" fill="none"/></svg>
<div class="t" style="left:45.5px;top:226.2px;font-size:13px;line-height:16px">CEM_1</div>
<svg class="a" style="left:24.5px;top:245.4px" width="16" height="16" viewBox="0 0 16 16"><circle cx="7.8" cy="7.8" r="7.7" fill="#3a78ec"/><path d="M-0.5 4.6Q4 6.2 8 7.3Q12 6.2 16.5 4.6M8 7.3L4 0" stroke="#fff" stroke-width="1.2" fill="none"/></svg>
<div class="t" style="left:45.5px;top:246.4px;font-size:13px;line-height:16px">PLTM</div>
<svg class="a" style="left:24.5px;top:265.6px" width="16" height="16" viewBox="0 0 16 16"><circle cx="7.8" cy="7.8" r="7.7" fill="#3a78ec"/><path d="M-0.5 4.6Q4 6.2 8 7.3Q12 6.2 16.5 4.6M8 7.3L4 0" stroke="#fff" stroke-width="1.2" fill="none"/></svg>
<div class="t" style="left:45.5px;top:266.6px;font-size:13px;line-height:16px">LCA</div>
<svg class="a" style="left:24.5px;top:285.8px" width="16" height="16" viewBox="0 0 16 16"><circle cx="7.8" cy="7.8" r="7.7" fill="#3a78ec"/><path d="M-0.5 4.6Q4 6.2 8 7.3Q12 6.2 16.5 4.6M8 7.3L4 0" stroke="#fff" stroke-width="1.2" fill="none"/></svg>
<div class="t" style="left:45.5px;top:286.8px;font-size:13px;line-height:16px">MSC</div>
<svg class="a" style="left:24.5px;top:306.0px" width="16" height="16" viewBox="0 0 16 16"><circle cx="7.8" cy="7.8" r="7.7" fill="#3a78ec"/><path d="M-0.5 4.6Q4 6.2 8 7.3Q12 6.2 16.5 4.6M8 7.3L4 0" stroke="#fff" stroke-width="1.2" fill="none"/></svg>
<div class="t" style="left:45.5px;top:307.0px;font-size:13px;line-height:16px">Encpp-Sharp</div>
<svg class="a" style="left:24.5px;top:326.2px" width="16" height="16" viewBox="0 0 16 16"><circle cx="7.8" cy="7.8" r="7.7" fill="#3a78ec"/><path d="M-0.5 4.6Q4 6.2 8 7.3Q12 6.2 16.5 4.6M8 7.3L4 0" stroke="#fff" stroke-width="1.2" fill="none"/></svg>
<div class="t" style="left:45.5px;top:327.2px;font-size:13px;line-height:16px">WDR</div>
<div class="a" style="left:7px;top:349.9px;width:9px;height:9px;border:1px solid #a0a0a0;border-radius:1px;background:linear-gradient(#fff,#e4e4e4)"></div><div class="a" style="left:9px;top:353.9px;width:5px;height:1px;background:#3050a0"></div>
<svg class="a" style="left:24.5px;top:346.4px" width="16" height="16" viewBox="0 0 16 16"><rect x="0.75" y="0.75" width="14.5" height="14.5" rx="1" fill="#fff" stroke="#6aa060" stroke-width="1.5"/><g fill="#6aa060"><circle cx="3.6" cy="5" r="0.9"/><circle cx="3.6" cy="8" r="0.9"/><circle cx="3.6" cy="11" r="0.9"/></g><g stroke="#8cb888" stroke-width="0.9"><path d="M4.5 5H13M4.5 8H13M4.5 11H13"/></g></svg>
<div class="t" style="left:45.5px;top:347.4px;font-size:13px;line-height:16px">Dynamic Tuning</div>
<div class="a" style="left:28px;top:370.1px;width:9px;height:9px;border:1px solid #a0a0a0;border-radius:1px;background:linear-gradient(#fff,#e4e4e4)"></div><div class="a" style="left:30px;top:374.1px;width:5px;height:1px;background:#3050a0"></div><div class="a" style="left:32px;top:372.1px;width:1px;height:5px;background:#3050a0"></div>
<svg class="a" style="left:46px;top:366.1px" width="16" height="17" viewBox="0 0 16 17"><g fill="#88d6b2"><rect x="0" y="0.3" width="6" height="6.3"/><rect x="0" y="10" width="6" height="6"/><rect x="8" y="0.5" width="7" height="2.3"/><rect x="8" y="4.3" width="7" height="2.3"/><rect x="8" y="10" width="7" height="2.2"/><rect x="8" y="14" width="7" height="2.3"/></g></svg>
<div class="t" style="left:67px;top:367.6px;font-size:13px;line-height:16px">Lum Mapping Point</div>
<div class="a" style="left:28px;top:390.3px;width:9px;height:9px;border:1px solid #a0a0a0;border-radius:1px;background:linear-gradient(#fff,#e4e4e4)"></div><div class="a" style="left:30px;top:394.3px;width:5px;height:1px;background:#3050a0"></div><div class="a" style="left:32px;top:392.3px;width:1px;height:5px;background:#3050a0"></div>
<svg class="a" style="left:46px;top:386.3px" width="16" height="17" viewBox="0 0 16 17"><g fill="#88d6b2"><rect x="0" y="0.3" width="6" height="6.3"/><rect x="0" y="10" width="6" height="6"/><rect x="8" y="0.5" width="7" height="2.3"/><rect x="8" y="4.3" width="7" height="2.3"/><rect x="8" y="10" width="7" height="2.2"/><rect x="8" y="14" width="7" height="2.3"/></g></svg>
<div class="t" style="left:67px;top:387.8px;font-size:13px;line-height:16px">Gain Mapping Point</div>
<div class="a" style="left:28px;top:410.5px;width:9px;height:9px;border:1px solid #a0a0a0;border-radius:1px;background:linear-gradient(#fff,#e4e4e4)"></div><div class="a" style="left:30px;top:414.5px;width:5px;height:1px;background:#3050a0"></div><div class="a" style="left:32px;top:412.5px;width:1px;height:5px;background:#3050a0"></div>
<svg class="a" style="left:46px;top:406.5px" width="16" height="17" viewBox="0 0 16 17"><g fill="#88d6b2"><rect x="0" y="0.3" width="6" height="6.3"/><rect x="0" y="10" width="6" height="6"/><rect x="8" y="0.5" width="7" height="2.3"/><rect x="8" y="4.3" width="7" height="2.3"/><rect x="8" y="10" width="7" height="2.2"/><rect x="8" y="14" width="7" height="2.3"/></g></svg>
<div class="t" style="left:67px;top:408.0px;font-size:13px;line-height:16px">Sharpness</div>
<div class="a" style="left:28px;top:430.7px;width:9px;height:9px;border:1px solid #a0a0a0;border-radius:1px;background:linear-gradient(#fff,#e4e4e4)"></div><div class="a" style="left:30px;top:434.7px;width:5px;height:1px;background:#3050a0"></div><div class="a" style="left:32px;top:432.7px;width:1px;height:5px;background:#3050a0"></div>
<svg class="a" style="left:46px;top:426.7px" width="16" height="17" viewBox="0 0 16 17"><g fill="#88d6b2"><rect x="0" y="0.3" width="6" height="6.3"/><rect x="0" y="10" width="6" height="6"/><rect x="8" y="0.5" width="7" height="2.3"/><rect x="8" y="4.3" width="7" height="2.3"/><rect x="8" y="10" width="7" height="2.2"/><rect x="8" y="14" width="7" height="2.3"/></g></svg>
<div class="t" style="left:67px;top:428.2px;font-size:13px;line-height:16px">Denoise</div>
<div class="a" style="left:28px;top:450.9px;width:9px;height:9px;border:1px solid #a0a0a0;border-radius:1px;background:linear-gradient(#fff,#e4e4e4)"></div><div class="a" style="left:30px;top:454.9px;width:5px;height:1px;background:#3050a0"></div><div class="a" style="left:32px;top:452.9px;width:1px;height:5px;background:#3050a0"></div>
<svg class="a" style="left:46px;top:446.9px" width="16" height="17" viewBox="0 0 16 17"><g fill="#88d6b2"><rect x="0" y="0.3" width="6" height="6.3"/><rect x="0" y="10" width="6" height="6"/><rect x="8" y="0.5" width="7" height="2.3"/><rect x="8" y="4.3" width="7" height="2.3"/><rect x="8" y="10" width="7" height="2.2"/><rect x="8" y="14" width="7" height="2.3"/></g></svg>
<div class="t" style="left:67px;top:448.4px;font-size:13px;line-height:16px">Black Level</div>
<div class="a" style="left:28px;top:471.1px;width:9px;height:9px;border:1px solid #a0a0a0;border-radius:1px;background:linear-gradient(#fff,#e4e4e4)"></div><div class="a" style="left:30px;top:475.1px;width:5px;height:1px;background:#3050a0"></div><div class="a" style="left:32px;top:473.1px;width:1px;height:5px;background:#3050a0"></div>
<svg class="a" style="left:46px;top:467.1px" width="16" height="17" viewBox="0 0 16 17"><g fill="#88d6b2"><rect x="0" y="0.3" width="6" height="6.3"/><rect x="0" y="10" width="6" height="6"/><rect x="8" y="0.5" width="7" height="2.3"/><rect x="8" y="4.3" width="7" height="2.3"/><rect x="8" y="10" width="7" height="2.2"/><rect x="8" y="14" width="7" height="2.3"/></g></svg>
<div class="t" style="left:67px;top:468.6px;font-size:13px;line-height:16px">DPC</div>
<div class="a" style="left:28px;top:491.3px;width:9px;height:9px;border:1px solid #a0a0a0;border-radius:1px;background:linear-gradient(#fff,#e4e4e4)"></div><div class="a" style="left:30px;top:495.3px;width:5px;height:1px;background:#3050a0"></div><div class="a" style="left:32px;top:493.3px;width:1px;height:5px;background:#3050a0"></div>
<svg class="a" style="left:46px;top:487.3px" width="16" height="17" viewBox="0 0 16 17"><g fill="#88d6b2"><rect x="0" y="0.3" width="6" height="6.3"/><rect x="0" y="10" width="6" height="6"/><rect x="8" y="0.5" width="7" height="2.3"/><rect x="8" y="4.3" width="7" height="2.3"/><rect x="8" y="10" width="7" height="2.2"/><rect x="8" y="14" width="7" height="2.3"/></g></svg>
<div class="t" style="left:67px;top:488.8px;font-size:13px;line-height:16px">PLTM</div>
<div class="a" style="left:28px;top:511.5px;width:9px;height:9px;border:1px solid #a0a0a0;border-radius:1px;background:linear-gradient(#fff,#e4e4e4)"></div><div class="a" style="left:30px;top:515.5px;width:5px;height:1px;background:#3050a0"></div><div class="a" style="left:32px;top:513.5px;width:1px;height:5px;background:#3050a0"></div>
<svg class="a" style="left:46px;top:507.5px" width="16" height="17" viewBox="0 0 16 17"><g fill="#88d6b2"><rect x="0" y="0.3" width="6" height="6.3"/><rect x="0" y="10" width="6" height="6"/><rect x="8" y="0.5" width="7" height="2.3"/><rect x="8" y="4.3" width="7" height="2.3"/><rect x="8" y="10" width="7" height="2.2"/><rect x="8" y="14" width="7" height="2.3"/></g></svg>
<div class="t" style="left:67px;top:509.0px;font-size:13px;line-height:16px">Defog</div>
<div class="a" style="left:28px;top:531.7px;width:9px;height:9px;border:1px solid #a0a0a0;border-radius:1px;background:linear-gradient(#fff,#e4e4e4)"></div><div class="a" style="left:30px;top:535.7px;width:5px;height:1px;background:#3050a0"></div><div class="a" style="left:32px;top:533.7px;width:1px;height:5px;background:#3050a0"></div>
<svg class="a" style="left:46px;top:527.7px" width="16" height="17" viewBox="0 0 16 17"><g fill="#88d6b2"><rect x="0" y="0.3" width="6" height="6.3"/><rect x="0" y="10" width="6" height="6"/><rect x="8" y="0.5" width="7" height="2.3"/><rect x="8" y="4.3" width="7" height="2.3"/><rect x="8" y="10" width="7" height="2.2"/><rect x="8" y="14" width="7" height="2.3"/></g></svg>
<div class="t" style="left:67px;top:529.2px;font-size:13px;line-height:16px">DRC</div>
<div class="a" style="left:28px;top:551.9px;width:9px;height:9px;border:1px solid #a0a0a0;border-radius:1px;background:linear-gradient(#fff,#e4e4e4)"></div><div class="a" style="left:30px;top:555.9px;width:5px;height:1px;background:#3050a0"></div><div class="a" style="left:32px;top:553.9px;width:1px;height:5px;background:#3050a0"></div>
<svg class="a" style="left:46px;top:547.9px" width="16" height="17" viewBox="0 0 16 17"><g fill="#88d6b2"><rect x="0" y="0.3" width="6" height="6.3"/><rect x="0" y="10" width="6" height="6"/><rect x="8" y="0.5" width="7" height="2.3"/><rect x="8" y="4.3" width="7" height="2.3"/><rect x="8" y="10" width="7" height="2.2"/><rect x="8" y="14" width="7" height="2.3"/></g></svg>
<div class="t" style="left:67px;top:549.4px;font-size:13px;line-height:16px">CEM</div>
<div class="a" style="left:28px;top:572.1px;width:9px;height:9px;border:1px solid #a0a0a0;border-radius:1px;background:linear-gradient(#fff,#e4e4e4)"></div><div class="a" style="left:30px;top:576.1px;width:5px;height:1px;background:#3050a0"></div><div class="a" style="left:32px;top:574.1px;width:1px;height:5px;background:#3050a0"></div>
<svg class="a" style="left:46px;top:568.1px" width="16" height="17" viewBox="0 0 16 17"><g fill="#88d6b2"><rect x="0" y="0.3" width="6" height="6.3"/><rect x="0" y="10" width="6" height="6"/><rect x="8" y="0.5" width="7" height="2.3"/><rect x="8" y="4.3" width="7" height="2.3"/><rect x="8" y="10" width="7" height="2.2"/><rect x="8" y="14" width="7" height="2.3"/></g></svg>
<div class="t" style="left:67px;top:569.6px;font-size:13px;line-height:16px">TDNF</div>
<div class="a" style="left:28px;top:592.3px;width:9px;height:9px;border:1px solid #a0a0a0;border-radius:1px;background:linear-gradient(#fff,#e4e4e4)"></div><div class="a" style="left:30px;top:596.3px;width:5px;height:1px;background:#3050a0"></div><div class="a" style="left:32px;top:594.3px;width:1px;height:5px;background:#3050a0"></div>
<svg class="a" style="left:46px;top:588.3px" width="16" height="17" viewBox="0 0 16 17"><g fill="#88d6b2"><rect x="0" y="0.3" width="6" height="6.3"/><rect x="0" y="10" width="6" height="6"/><rect x="8" y="0.5" width="7" height="2.3"/><rect x="8" y="4.3" width="7" height="2.3"/><rect x="8" y="10" width="7" height="2.2"/><rect x="8" y="14" width="7" height="2.3"/></g></svg>
<div class="t" style="left:67px;top:589.8px;font-size:13px;line-height:16px">AE</div>
<div class="a" style="left:28px;top:612.5px;width:9px;height:9px;border:1px solid #a0a0a0;border-radius:1px;background:linear-gradient(#fff,#e4e4e4)"></div><div class="a" style="left:30px;top:616.5px;width:5px;height:1px;background:#3050a0"></div><div class="a" style="left:32px;top:614.5px;width:1px;height:5px;background:#3050a0"></div>
<svg class="a" style="left:46px;top:608.5px" width="16" height="17" viewBox="0 0 16 17"><g fill="#88d6b2"><rect x="0" y="0.3" width="6" height="6.3"/><rect x="0" y="10" width="6" height="6"/><rect x="8" y="0.5" width="7" height="2.3"/><rect x="8" y="4.3" width="7" height="2.3"/><rect x="8" y="10" width="7" height="2.2"/><rect x="8" y="14" width="7" height="2.3"/></g></svg>
<div class="t" style="left:67px;top:610.0px;font-size:13px;line-height:16px">GTM</div>
<div class="a" style="left:28px;top:632.7px;width:9px;height:9px;border:1px solid #a0a0a0;border-radius:1px;background:linear-gradient(#fff,#e4e4e4)"></div><div class="a" style="left:30px;top:636.7px;width:5px;height:1px;background:#3050a0"></div><div class="a" style="left:32px;top:634.7px;width:1px;height:5px;background:#3050a0"></div>
<svg class="a" style="left:46px;top:628.7px" width="16" height="17" viewBox="0 0 16 17"><g fill="#88d6b2"><rect x="0" y="0.3" width="6" height="6.3"/><rect x="0" y="10" width="6" height="6"/><rect x="8" y="0.5" width="7" height="2.3"/><rect x="8" y="4.3" width="7" height="2.3"/><rect x="8" y="10" width="7" height="2.2"/><rect x="8" y="14" width="7" height="2.3"/></g></svg>
<div class="t" style="left:67px;top:630.2px;font-size:13px;line-height:16px">LCA</div>
<div class="a" style="left:28px;top:652.9px;width:9px;height:9px;border:1px solid #a0a0a0;border-radius:1px;background:linear-gradient(#fff,#e4e4e4)"></div><div class="a" style="left:30px;top:656.9px;width:5px;height:1px;background:#3050a0"></div><div class="a" style="left:32px;top:654.9px;width:1px;height:5px;background:#3050a0"></div>
<svg class="a" style="left:46px;top:648.9px" width="16" height="17" viewBox="0 0 16 17"><g fill="#88d6b2"><rect x="0" y="0.3" width="6" height="6.3"/><rect x="0" y="10" width="6" height="6"/><rect x="8" y="0.5" width="7" height="2.3"/><rect x="8" y="4.3" width="7" height="2.3"/><rect x="8" y="10" width="7" height="2.2"/><rect x="8" y="14" width="7" height="2.3"/></g></svg>
<div class="t" style="left:67px;top:650.4px;font-size:13px;line-height:16px">CFA</div>
<div class="a" style="left:28px;top:673.1px;width:9px;height:9px;border:1px solid #a0a0a0;border-radius:1px;background:linear-gradient(#fff,#e4e4e4)"></div><div class="a" style="left:30px;top:677.1px;width:5px;height:1px;background:#3050a0"></div><div class="a" style="left:32px;top:675.1px;width:1px;height:5px;background:#3050a0"></div>
<svg class="a" style="left:46px;top:669.1px" width="16" height="17" viewBox="0 0 16 17"><g fill="#88d6b2"><rect x="0" y="0.3" width="6" height="6.3"/><rect x="0" y="10" width="6" height="6"/><rect x="8" y="0.5" width="7" height="2.3"/><rect x="8" y="4.3" width="7" height="2.3"/><rect x="8" y="10" width="7" height="2.2"/><rect x="8" y="14" width="7" height="2.3"/></g></svg>
<div class="t" style="left:67px;top:670.6px;font-size:13px;line-height:16px">Encpp-Sharp</div>
<div class="a" style="left:28px;top:693.3px;width:9px;height:9px;border:1px solid #a0a0a0;border-radius:1px;background:linear-gradient(#fff,#e4e4e4)"></div><div class="a" style="left:30px;top:697.3px;width:5px;height:1px;background:#3050a0"></div><div class="a" style="left:32px;top:695.3px;width:1px;height:5px;background:#3050a0"></div>
<svg class="a" style="left:46px;top:689.3px" width="16" height="17" viewBox="0 0 16 17"><g fill="#88d6b2"><rect x="0" y="0.3" width="6" height="6.3"/><rect x="0" y="10" width="6" height="6"/><rect x="8" y="0.5" width="7" height="2.3"/><rect x="8" y="4.3" width="7" height="2.3"/><rect x="8" y="10" width="7" height="2.2"/><rect x="8" y="14" width="7" height="2.3"/></g></svg>
<div class="t" style="left:67px;top:690.8px;font-size:13px;line-height:16px">WDR</div>
<div class="a" style="left:28px;top:713.5px;width:9px;height:9px;border:1px solid #a0a0a0;border-radius:1px;background:linear-gradient(#fff,#e4e4e4)"></div><div class="a" style="left:30px;top:717.5px;width:5px;height:1px;background:#3050a0"></div><div class="a" style="left:32px;top:715.5px;width:1px;height:5px;background:#3050a0"></div>
<svg class="a" style="left:46px;top:709.5px" width="16" height="17" viewBox="0 0 16 17"><g fill="#88d6b2"><rect x="0" y="0.3" width="6" height="6.3"/><rect x="0" y="10" width="6" height="6"/><rect x="8" y="0.5" width="7" height="2.3"/><rect x="8" y="4.3" width="7" height="2.3"/><rect x="8" y="10" width="7" height="2.2"/><rect x="8" y="14" width="7" height="2.3"/></g></svg>
<div class="t" style="left:67px;top:711.0px;font-size:13px;line-height:16px">Encoder-Denoise</div>
<div class="a" style="left:28px;top:733.7px;width:9px;height:9px;border:1px solid #a0a0a0;border-radius:1px;background:linear-gradient(#fff,#e4e4e4)"></div><div class="a" style="left:30px;top:737.7px;width:5px;height:1px;background:#3050a0"></div><div class="a" style="left:32px;top:735.7px;width:1px;height:5px;background:#3050a0"></div>
<svg class="a" style="left:46px;top:729.7px" width="16" height="17" viewBox="0 0 16 17"><g fill="#88d6b2"><rect x="0" y="0.3" width="6" height="6.3"/><rect x="0" y="10" width="6" height="6"/><rect x="8" y="0.5" width="7" height="2.3"/><rect x="8" y="4.3" width="7" height="2.3"/><rect x="8" y="10" width="7" height="2.2"/><rect x="8" y="14" width="7" height="2.3"/></g></svg>
<div class="t" style="left:67px;top:731.2px;font-size:13px;line-height:16px">Shading</div>
</div>

<!-- ribbon bottom lines -->
<div class="a" style="left:0;top:123px;width:1755px;height:1px;background:#eaf2fe"></div>
<div class="a" style="left:0;top:124px;width:1755px;height:1px;background:#b4cbee"></div>
<div class="a" style="left:0;top:125px;width:1755px;height:1px;background:#7890bc"></div>
<div class="a" style="left:0;top:126px;width:1755px;height:1px;background:#a2bce6"></div>
<div class="a" style="left:0;top:127px;width:1755px;height:1px;background:#dce8fa"></div>
<svg class="a" style="left:2px;top:2px" width="33" height="33" viewBox="0 0 33 33">
  <path d="M16.5 16.5 L16.5 1 A15.5 15.5 0 0 1 32 16.5 Z" fill="#ff0000"/>
  <path d="M16.5 16.5 L32 16.5 A15.5 15.5 0 0 1 16.5 32 Z" fill="#0000ff"/>
  <path d="M16.5 16.5 L16.5 32 A15.5 15.5 0 0 1 1 16.5 Z" fill="#00e000"/>
  <path d="M16.5 16.5 L1 16.5 A15.5 15.5 0 0 1 16.5 1 Z" fill="#ffff00"/>
  <path d="M16.5 9.5 L23.5 16.5 L16.5 23.5 L9.5 16.5 Z" fill="#fff"/>
</svg>
</body></html>
